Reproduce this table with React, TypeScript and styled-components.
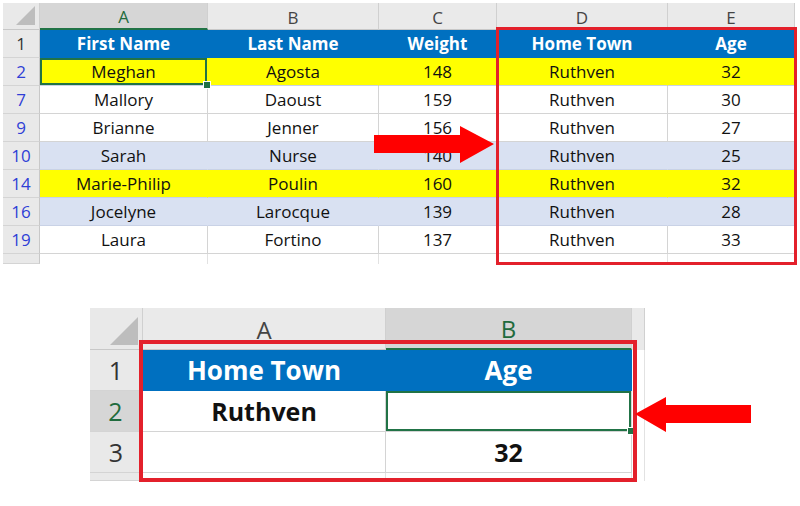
import React from "react";
import styled, { createGlobalStyle } from "styled-components";

const Global = createGlobalStyle`
  html, body { margin: 0; padding: 0; background: #ffffff; }
  body { font-family: "Open Sans", "Lato", sans-serif; width: 800px; height: 506px; overflow: hidden; }
`;

const Page = styled.div`
  display: flex;
  flex-direction: column;
  align-items: flex-start;
  padding: 3px 0 0 3px;
`;

const SheetWrap = styled.div<{ $ml?: number; $mt?: number }>`
  position: relative;
  margin-left: ${(p) => p.$ml ?? 0}px;
  margin-top: ${(p) => p.$mt ?? 0}px;
`;

const Grid = styled.div<{ $cols: string; $rows: string }>`
  display: grid;
  grid-template-columns: ${(p) => p.$cols};
  grid-template-rows: ${(p) => p.$rows};
  background: #ffffff;
`;

const Corner = styled.div<{ $size: number }>`
  background: #e9e9e9;
  border-right: 1px solid #d0d0d0;
  border-bottom: 1px solid #c8c8c8;
  position: relative;
  &::after {
    content: "";
    position: absolute;
    right: 4px;
    bottom: 4px;
    width: 0;
    height: 0;
    border-left: ${(p) => p.$size}px solid transparent;
    border-bottom: ${(p) => p.$size}px solid #bdbdbd;
  }
`;

const ColHead = styled.div<{ $sel?: boolean; $fs: number }>`
  display: flex;
  align-items: center;
  justify-content: center;
  box-sizing: border-box;
  background: ${(p) => (p.$sel ? "#d6d6d6" : "#eaeaea")};
  color: ${(p) => (p.$sel ? "#1f6b3d" : "#444")};
  border-right: 1px solid #d0d0d0;
  border-bottom: ${(p) => (p.$sel ? "2px solid #217346" : "1px solid #c8c8c8")};
  font-size: ${(p) => p.$fs}px;
  line-height: 1;
  padding-top: 2px;
`;

const RowHead = styled.div<{ $sel?: boolean; $blue?: boolean; $fs: number }>`
  display: flex;
  align-items: center;
  justify-content: center;
  box-sizing: border-box;
  background: ${(p) => (p.$sel ? "#d6d6d6" : "#e9e9e9")};
  color: ${(p) => (p.$sel ? "#1f6b3d" : p.$blue ? "#2f3fd6" : "#333")};
  border-bottom: 1px solid #d4d4d4;
  border-right: ${(p) => (p.$sel ? "2px solid #217346" : "1px solid #c8c8c8")};
  font-size: ${(p) => p.$fs}px;
`;

type Fill = "blue" | "yellow" | "light" | "white";
const bgs: Record<Fill, string> = {
  blue: "#0070c0",
  yellow: "#ffff00",
  light: "#d9e1f2",
  white: "#ffffff",
};

const Cell = styled.div<{ $fill: Fill; $fs: number; $bold?: boolean; $sel?: boolean }>`
  position: relative;
  display: flex;
  align-items: center;
  justify-content: center;
  box-sizing: border-box;
  background: ${(p) => bgs[p.$fill]};
  color: ${(p) => (p.$fill === "blue" ? "#ffffff" : "#111")};
  font-weight: ${(p) => (p.$bold || p.$fill === "blue" ? 700 : 400)};
  font-size: ${(p) => p.$fs}px;
  border-bottom: 1px solid ${(p) => (p.$fill === "white" ? "#d4d4d4" : p.$fill === "blue" ? "#0070c0" : "#c9d2e6")};
  border-right: 1px solid ${(p) => (p.$fill === "white" ? "#d4d4d4" : bgs[p.$fill])};
  ${(p) =>
    p.$sel
      ? `box-shadow: inset 0 0 0 2px #217346;
  &::after {
    content: "";
    position: absolute;
    right: -4px;
    bottom: -4px;
    width: 6px;
    height: 6px;
    background: #217346;
    border: 1px solid #fff;
    z-index: 2;
  }`
      : ""}
`;

const Stub = styled.div`
  background: #ffffff;
  border-right: 1px solid #e2e2e2;
`;

const StubHead = styled.div`
  background: #e9e9e9;
  border-right: 1px solid #d0d0d0;
`;

const RedBox = styled.div<{ $l: number; $t: number; $w: number; $h: number; $b: number }>`
  position: absolute;
  left: ${(p) => p.$l}px;
  top: ${(p) => p.$t}px;
  width: ${(p) => p.$w}px;
  height: ${(p) => p.$h}px;
  border: ${(p) => p.$b}px solid #e3202b;
  box-sizing: border-box;
  pointer-events: none;
  z-index: 3;
`;

const ArrowSvg = styled.svg<{ $l: number; $t: number }>`
  position: absolute;
  left: ${(p) => p.$l}px;
  top: ${(p) => p.$t}px;
  z-index: 4;
`;

type Row = { n: string; fill: Fill; vals: string[]; sel?: number };

const topRows: Row[] = [
  { n: "2", fill: "yellow", vals: ["Meghan", "Agosta", "148", "Ruthven", "32"], sel: 0 },
  { n: "7", fill: "white", vals: ["Mallory", "Daoust", "159", "Ruthven", "30"] },
  { n: "9", fill: "white", vals: ["Brianne", "Jenner", "156", "Ruthven", "27"] },
  { n: "10", fill: "light", vals: ["Sarah", "Nurse", "140", "Ruthven", "25"] },
  { n: "14", fill: "yellow", vals: ["Marie-Philip", "Poulin", "160", "Ruthven", "32"] },
  { n: "16", fill: "light", vals: ["Jocelyne", "Larocque", "139", "Ruthven", "28"] },
  { n: "19", fill: "white", vals: ["Laura", "Fortino", "137", "Ruthven", "33"] },
];

const letters = ["A", "B", "C", "D", "E"];
const heads = ["First Name", "Last Name", "Weight", "Home Town", "Age"];

const TopSheet = () => (
  <SheetWrap>
    <Grid $cols="37px 168px 171px 118px 171px 127px" $rows="27px repeat(8, 28px) 10px">
      <Corner $size={19} />
      {letters.map((l, i) => (
        <ColHead key={l} $fs={17} $sel={i === 0}>
          {l}
        </ColHead>
      ))}
      <RowHead $fs={17}>1</RowHead>
      {heads.map((h) => (
        <Cell key={h} $fill="blue" $fs={17}>
          {h}
        </Cell>
      ))}
      {topRows.map((r) => (
        <React.Fragment key={r.n}>
          <RowHead $fs={17} $blue>
            {r.n}
          </RowHead>
          {r.vals.map((v, i) => (
            <Cell key={i} $fill={r.fill} $fs={17} $sel={r.sel === i}>
              {v}
            </Cell>
          ))}
        </React.Fragment>
      ))}
      <RowHead $fs={17} $blue />
      {letters.map((l) => (
        <Stub key={l} />
      ))}
    </Grid>
    <RedBox $l={493} $t={24} $w={301} $h={238} $b={3} />
    <ArrowSvg $l={371} $t={122} width={122} height={40} viewBox="0 0 122 40">
      <polygon points="0,10 86,10 86,1 120,19 86,38 86,28 0,28" fill="#ff0000" />
    </ArrowSvg>
  </SheetWrap>
);

const BottomSheet = () => (
  <SheetWrap $ml={87} $mt={44}>
    <Grid $cols="53px 243px 246px 13px" $rows="42px 41px 41px 41px 8px">
      <Corner $size={28} />
      <ColHead $fs={24}>A</ColHead>
      <ColHead $fs={24} $sel>
        B
      </ColHead>
      <StubHead />

      <RowHead $fs={25}>1</RowHead>
      <Cell $fill="blue" $fs={26}>
        Home Town
      </Cell>
      <Cell $fill="blue" $fs={26}>
        Age
      </Cell>
      <Stub />

      <RowHead $fs={25} $sel>
        2
      </RowHead>
      <Cell $fill="white" $fs={25} $bold>
        Ruthven
      </Cell>
      <Cell $fill="white" $fs={25} $bold $sel />
      <Stub />

      <RowHead $fs={25}>3</RowHead>
      <Cell $fill="white" $fs={25} $bold />
      <Cell $fill="white" $fs={25} $bold>
        32
      </Cell>
      <Stub />

      <RowHead $fs={25} />
      <Stub />
      <Stub />
      <Stub />
    </Grid>
    <RedBox $l={49} $t={32} $w={498} $h={142} $b={4} />
    <ArrowSvg $l={544} $t={89} width={118} height={36} viewBox="0 0 118 36">
      <polygon points="1,17 32,0 32,8 117,8 117,26 32,26 32,35" fill="#ff0000" />
    </ArrowSvg>
  </SheetWrap>
);

export default function App() {
  return (
    <>
      <Global />
      <Page>
        <TopSheet />
        <BottomSheet />
      </Page>
    </>
  );
}
